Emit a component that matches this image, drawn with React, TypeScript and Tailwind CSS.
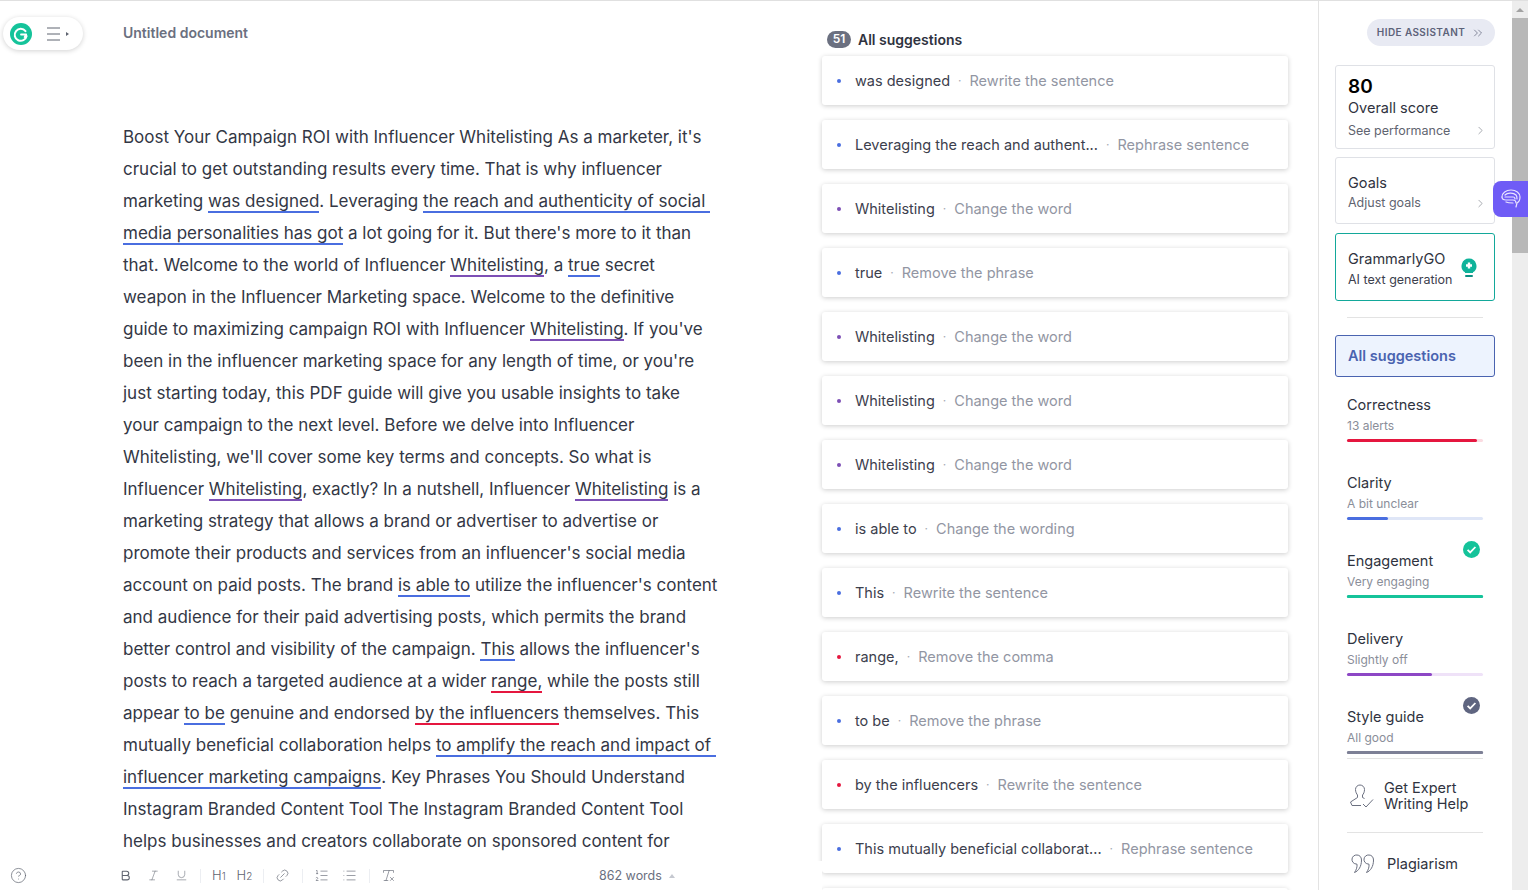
import * as React from "react"
import { Bold, ChevronRight, ChevronsRight, CircleHelp, Italic, Link2, List, ListOrdered, RemoveFormatting, Underline } from "lucide-react"

type Seg = string | [string, "b" | "p" | "r"]

const under = { b: "border-[#4a6ee0]", p: "border-[#7d4fb5]", r: "border-[#e5173f]" }

const lines: Seg[][] = [
    ["Boost Your Campaign ROI with Influencer Whitelisting As a marketer, it's"],
    ["crucial to get outstanding results every time. That is why influencer"],
    ["marketing ", ["was designed", "b"], ". Leveraging ", ["the reach and authenticity of social ", "b"]],
    [["media personalities has got", "b"], " a lot going for it. But there's more to it than"],
    ["that. Welcome to the world of Influencer ", ["Whitelisting", "p"], ", a ", ["true", "b"], " secret"],
    ["weapon in the Influencer Marketing space. Welcome to the definitive"],
    ["guide to maximizing campaign ROI with Influencer ", ["Whitelisting", "p"], ". If you've"],
    ["been in the influencer marketing space for any length of time, or you're"],
    ["just starting today, this PDF guide will give you usable insights to take"],
    ["your campaign to the next level. Before we delve into Influencer"],
    ["Whitelisting, we'll cover some key terms and concepts. So what is"],
    ["Influencer ", ["Whitelisting", "p"], ", exactly? In a nutshell, Influencer ", ["Whitelisting", "p"], " is a"],
    ["marketing strategy that allows a brand or advertiser to advertise or"],
    ["promote their products and services from an influencer's social media"],
    ["account on paid posts. The brand ", ["is able to", "b"], " utilize the influencer's content"],
    ["and audience for their paid advertising posts, which permits the brand"],
    ["better control and visibility of the campaign. ", ["This", "b"], " allows the influencer's"],
    ["posts to reach a targeted audience at a wider ", ["range,", "r"], " while the posts still"],
    ["appear ", ["to be", "b"], " genuine and endorsed ", ["by the influencers", "r"], " themselves. This"],
    ["mutually beneficial collaboration helps ", ["to amplify the reach and impact of ", "b"]],
    [["influencer marketing campaigns", "b"], ". Key Phrases You Should Understand"],
    ["Instagram Branded Content Tool The Instagram Branded Content Tool"],
    ["helps businesses and creators collaborate on sponsored content for"],
]

const suggestions: [string, string, string][] = [
    ["was designed", "Rewrite the sentence", "bg-[#4a6ee0]"],
    ["Leveraging the reach and authent...", "Rephrase sentence", "bg-[#4a6ee0]"],
    ["Whitelisting", "Change the word", "bg-[#7d4fb5]"],
    ["true", "Remove the phrase", "bg-[#4a6ee0]"],
    ["Whitelisting", "Change the word", "bg-[#7d4fb5]"],
    ["Whitelisting", "Change the word", "bg-[#7d4fb5]"],
    ["Whitelisting", "Change the word", "bg-[#7d4fb5]"],
    ["is able to", "Change the wording", "bg-[#4a6ee0]"],
    ["This", "Rewrite the sentence", "bg-[#4a6ee0]"],
    ["range,", "Remove the comma", "bg-[#e5173f]"],
    ["to be", "Remove the phrase", "bg-[#4a6ee0]"],
    ["by the influencers", "Rewrite the sentence", "bg-[#e5173f]"],
    ["This mutually beneficial collaborat...", "Rephrase sentence", "bg-[#4a6ee0]"],
]

function Logo() {
    return (
        <svg width="22" height="22" viewBox="0 0 22 22">
            <circle cx="11" cy="11" r="11" fill="#15c39a" />
            <path d="M15.5 8.2A6 6 0 1 0 16.6 13" fill="none" stroke="#fff" strokeWidth="2" strokeLinecap="round" />
            <path d="M11 11.5h5.2l-1.6 2.6" fill="none" stroke="#fff" strokeWidth="1.8" strokeLinecap="round" strokeLinejoin="round" />
        </svg>
    )
}

function MenuIcon() {
    return (
        <svg width="24" height="14" viewBox="0 0 24 14" className="text-[#5f6470]">
            <path d="M1 1h13M1 7h13M1 13h13" stroke="currentColor" strokeWidth="1" />
            <path d="M20 5l3 2-3 2z" fill="currentColor" />
        </svg>
    )
}

function Check({ color }: { color: string }) {
    return (
        <svg width="17" height="17" viewBox="0 0 17 17">
            <circle cx="8.5" cy="8.5" r="8.5" fill={color} />
            <path d="M4.6 8.8l2.6 2.6 5.2-5.4" fill="none" stroke="#fff" strokeWidth="1.8" />
        </svg>
    )
}

function Bulb() {
    return (
        <svg width="16" height="20" viewBox="0 0 16 20">
            <path d="M8 0.5a7.5 7.5 0 0 0-4 13.8V15h8v-.7A7.5 7.5 0 0 0 8 .5z" fill="#0fb39a" />
            <path d="M8 4.5v6M5 7.5h6" stroke="#fff" strokeWidth="2.4" />
            <path d="M5 18h6" stroke="#0c8f83" strokeWidth="2" strokeLinecap="round" />
        </svg>
    )
}

function BrainIcon() {
    return (
        <svg width="22" height="20" viewBox="0 0 22 20" fill="none" stroke="#e9e4ff" strokeWidth="1.2" strokeLinecap="round">
            <path d="M2 8c0-4 4-7 9-7s9 3 9 7c0 3-1 5-3 6l-1 4" />
            <path d="M2 8c0 2 2 3 4 3h7c2 0 3 1 3 3" />
            <path d="M5 6c2-2 8-3 11 0 1 1 1 3 1 4" />
            <path d="M5 8h8c1 0 2 0 2 2" />
            <path d="M6 13c2 1 5 1 7 1" />
        </svg>
    )
}

function ExpertIcon() {
    return (
        <svg width="26" height="26" viewBox="0 0 26 26" fill="none" stroke="#6b7080" strokeWidth="1">
            <path d="M7.5 6.5a4.5 4.5 0 0 1 9 0c0 2.5-1 4.5-2 5.5v2.5l2 1" />
            <path d="M9.5 12c-.8-1-2-3-2-5.500M9.500 12v2.500l-7 4.500 1.500 3.500h9" />
            <path d="M15 21l3 3 7-7.500" />
        </svg>
    )
}

function QuoteIcon() {
    return (
        <svg width="24" height="20" viewBox="0 0 24 20" fill="none" stroke="#6b7080" strokeWidth="1">
            <path d="M6 1a4.500 4.500 0 0 0-1 9l1 .2c.3 2.500-.5 5.500-2.500 8.300 4-1.500 7-6 7-12.500 0-3-2-5-4.500-5z" />
            <path d="M18 1a4.500 4.500 0 0 0-1 9l1 .2c.3 2.500-.5 5.500-2.500 8.300 4-1.500 7-6 7-12.500 0-3-2-5-4.500-5z" />
        </svg>
    )
}

function Category({ title, sub, bar, track, pct, badge }: { title: string; sub: string; bar: string; track: string; pct: string; badge?: string }) {
    return (
        <div className="relative h-[78px] pl-[12px] pr-[12px] pt-[18px]">
            <div className="text-[14.5px] leading-[20px] text-[#2f3340]">{title}</div>
            <div className="mt-[2px] text-[12px] leading-[18px] text-[#8a8e99]">{sub}</div>
            <div className={`mt-[4px] h-[3px] w-[136px] rounded-full ${track}`}>
                <div className={`h-[3px] rounded-full ${bar} ${pct}`} />
            </div>
            {badge && <div className="absolute right-[15px] top-[8px]"><Check color={badge} /></div>}
        </div>
    )
}

export default function App() {
    return (
        <div className="flex h-[890px] w-[1528px] overflow-hidden border-t border-[#e0e0e0] bg-white font-['Inter',sans-serif] text-[#2f3340]">
            <main className="relative w-[822px] shrink-0 pl-[123px]">
                <div className="absolute left-[3px] top-[16px] flex h-[33px] w-[80px] items-center gap-[14px] rounded-full bg-white pl-[7px] shadow-[0_1px_5px_rgba(0,0,0,0.18)]">
                    <Logo />
                    <MenuIcon />
                </div>
                <h1 className="pt-[23px] text-[14px] font-semibold leading-[18px] text-[#6b7080]">Untitled document</h1>
                <div className="mt-[79px] whitespace-pre text-[17px] leading-[32px] text-[#333745]">
                    {lines.map((line, i) => (
                        <div key={i}>
                            {line.map((seg, j) =>
                                typeof seg === "string" ? (
                                    <span key={j}>{seg}</span>
                                ) : (
                                    <span key={j} className={`border-b-2 ${under[seg[1]]}`}>{seg[0]}</span>
                                ),
                            )}
                        </div>
                    ))}
                </div>
                <div className="absolute inset-x-0 bottom-0 flex h-[29px] items-center bg-white text-[#5f6470]">
                    <CircleHelp size={17} strokeWidth={1} className="absolute left-[10px] top-[6px]" />
                    <div className="ml-[119px] flex items-center">
                        <Bold size={13} strokeWidth={2} />
                        <Italic size={13} strokeWidth={1} className="ml-[15px]" />
                        <Underline size={13} strokeWidth={1} className="ml-[15px]" />
                        <span className="ml-[12px] h-[14px] w-px bg-[#eceef2]" />
                        <span className="ml-[11px] text-[13px] font-light">H<span className="text-[10px]">1</span></span>
                        <span className="ml-[11px] text-[13px] font-light">H<span className="text-[10px]">2</span></span>
                        <span className="ml-[11px] h-[14px] w-px bg-[#eceef2]" />
                        <Link2 size={15} strokeWidth={1} className="ml-[11px] -rotate-45" />
                        <span className="ml-[12px] h-[14px] w-px bg-[#eceef2]" />
                        <ListOrdered size={15} strokeWidth={1} className="ml-[11px]" />
                        <List size={15} strokeWidth={1} className="ml-[13px]" />
                        <span className="ml-[12px] h-[14px] w-px bg-[#eceef2]" />
                        <RemoveFormatting size={15} strokeWidth={1} className="ml-[11px]" />
                    </div>
                    <span className="absolute left-[599px] top-[7px] text-[12.5px] leading-[16px] text-[#6b7080]">862 words</span>
                    <span className="absolute left-[669px] top-[13px] h-0 w-0 border-x-[3px] border-b-[4px] border-x-transparent border-b-[#c5c8d0]" />
                </div>
            </main>

            <section className="w-[466px] shrink-0">
                <div className="flex h-[55px] items-center gap-[7px] pl-[5px] pt-[21px]">
                    <span className="flex h-[17px] w-[24px] items-center justify-center rounded-full bg-[#6b7080] text-[12px] font-semibold text-white">51</span>
                    <span className="text-[14px] font-semibold text-[#2f3340]">All suggestions</span>
                </div>
                <div className="flex flex-col gap-[15px]">
                    {suggestions.map(([word, hint, dot], i) => (
                        <div key={i} className="flex h-[49px] shrink-0 items-center rounded-[3px] bg-white pl-[15px] shadow-[0_1px_5px_rgba(0,0,0,0.2)]">
                            <span className={`h-[4px] w-[4px] rounded-full ${dot}`} />
                            <span className="ml-[14px] text-[14.5px] text-[#3c404d]">{word}</span>
                            <span className="mx-[8px] text-[12px] text-[#a8abb5]">·</span>
                            <span className="text-[14.5px] text-[#9296a3]">{hint}</span>
                        </div>
                    ))}
                    <div className="h-[49px] shrink-0 rounded-[3px] bg-white shadow-[0_1px_5px_rgba(0,0,0,0.2)]" />
                </div>
            </section>

            <aside className="relative ml-[30px] w-[194px] shrink-0 border-l border-[#e3e3e3] bg-white pl-[16px] pr-[17px]">
                <div className="flex justify-end pt-[18px]">
                    <div className="flex h-[27px] w-[128px] items-center justify-center gap-[6px] rounded-full bg-[#e8eaf3] text-[10px] font-semibold tracking-[0.04em] text-[#5d6279]">
                        HIDE ASSISTANT <ChevronsRight size={14} strokeWidth={1.2} />
                    </div>
                </div>
                <div className="mt-[19px] h-[84px] rounded-[3px] border border-[#dfe1e6] pl-[12px] pt-[10px]">
                    <div className="text-[19px] font-semibold leading-[22px] text-black">80</div>
                    <div className="text-[14.5px] leading-[20px] text-[#2f3340]">Overall score</div>
                    <div className="relative mt-[4px] text-[12.5px] leading-[18px] text-[#5f6470]">
                        See performance
                        <ChevronRight size={13} strokeWidth={1} className="absolute right-[7px] top-[2px]" />
                    </div>
                </div>
                <div className="mt-[8px] h-[67px] rounded-[3px] border border-[#dfe1e6] pl-[12px] pt-[15px]">
                    <div className="text-[14.5px] leading-[20px] text-[#2f3340]">Goals</div>
                    <div className="relative mt-[1px] text-[12.5px] leading-[18px] text-[#5f6470]">
                        Adjust goals
                        <ChevronRight size={13} strokeWidth={1} className="absolute right-[7px] top-[3px]" />
                    </div>
                </div>
                <div className="relative mt-[9px] h-[68px] rounded-[3px] border border-[#13a89a] pl-[12px] pt-[15px]">
                    <div className="text-[14.5px] leading-[20px] text-[#2f3340]">GrammarlyGO</div>
                    <div className="mt-[2px] text-[12.5px] leading-[18px] text-[#3c404d]">AI text generation</div>
                    <div className="absolute right-[17px] top-[24px]"><Bulb /></div>
                </div>
                <div className="mx-[12px] mt-[16px] h-px bg-[#e3e3e3]" />
                <div className="mt-[17px] flex h-[42px] items-center rounded-[3px] border border-[#4a63b0] bg-[#edf3fe] pl-[12px] text-[14.5px] font-semibold text-[#4a63b0]">All suggestions</div>
                <Category title="Correctness" sub="13 alerts" bar="bg-[#e5173f]" track="bg-[#fbdbe1]" pct="w-[130px]" />
                <Category title="Clarity" sub="A bit unclear" bar="bg-[#4a6ee0]" track="bg-[#dfe6f7]" pct="w-[41px]" />
                <Category title="Engagement" sub="Very engaging" bar="bg-[#15c39a]" track="bg-[#15c39a]" pct="w-full" badge="#15c39a" />
                <Category title="Delivery" sub="Slightly off" bar="bg-[#8d47c5]" track="bg-[#efe2f8]" pct="w-[85px]" />
                <Category title="Style guide" sub="All good" bar="bg-[#7d8096]" track="bg-[#7d8096]" pct="w-full" badge="#5f6580" />
                <div className="mx-[12px] mt-[-9px] h-px bg-[#e3e3e3]" />
                <div className="flex h-[73px] items-center gap-[10px] pl-[13px] text-[14.5px] leading-[16px] text-[#2f3340]">
                    <ExpertIcon />
                    <span>Get Expert<br />Writing Help</span>
                </div>
                <div className="mx-[12px] h-px bg-[#e3e3e3]" />
                <div className="flex h-[62px] items-center gap-[12px] pl-[16px] text-[14.5px] text-[#2f3340]">
                    <QuoteIcon />
                    Plagiarism
                </div>
                <div className="absolute -right-[16px] top-[180px] flex h-[36px] w-[35px] items-center justify-center rounded-l-[8px] bg-[#6f5cf6]">
                    <BrainIcon />
                </div>
            </aside>

            <div className="flex w-[16px] shrink-0 flex-col bg-[#ededed]">
                <div className="flex h-[17px] items-center justify-center"><span className="h-0 w-0 border-x-[4px] border-b-[4px] border-x-transparent border-b-[#a3a3a3]" /></div>
                <div className="h-[235px] bg-[#b8b8b8]" />
            </div>
        </div>
    )
}
